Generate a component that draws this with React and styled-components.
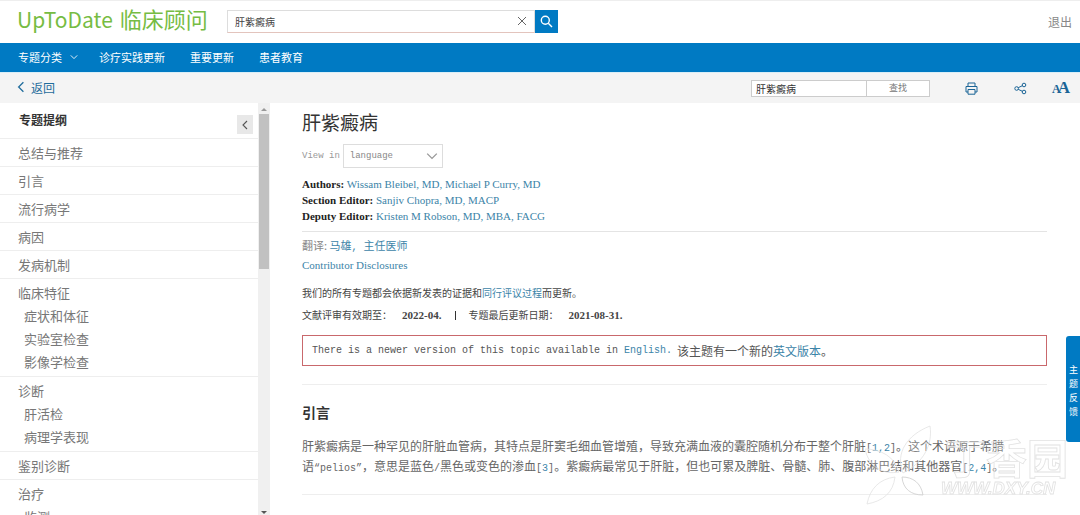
import styled, { createGlobalStyle } from "styled-components";
import { useState } from "react";

const outline = [
    { title: "总结与推荐" },
    { title: "引言" },
    { title: "流行病学" },
    { title: "病因" },
    { title: "发病机制" },
    { title: "临床特征", items: ["症状和体征", "实验室检查", "影像学检查"] },
    { title: "诊断", items: ["肝活检", "病理学表现"] },
    { title: "鉴别诊断" },
    { title: "治疗", items: ["监测"] },
];

const people = [
    { role: "Authors:", names: "Wissam Bleibel, MD, Michael P Curry, MD" },
    { role: "Section Editor:", names: "Sanjiv Chopra, MD, MACP" },
    { role: "Deputy Editor:", names: "Kristen M Robson, MD, MBA, FACG" },
];

const Chevron = ({ dir, size }) => {
    const paths = {
        down: "M1 3 L5 7 L9 3",
        left: "M7 1 L3 5 L7 9",
    };
    return (
        <svg width={size} height={size} viewBox="0 0 10 10" fill="none" stroke="currentColor" strokeWidth="1.1">
            <path d={paths[dir]} />
        </svg>
    );
};

const SearchIcon = () => (
    <svg width="13" height="13" viewBox="0 0 13 13" fill="none" stroke="#fff" strokeWidth="1.4">
        <circle cx="5.3" cy="5.3" r="4" />
        <path d="M8.3 8.3 L12 12" />
    </svg>
);

const ClearIcon = () => (
    <svg width="10" height="10" viewBox="0 0 10 10" fill="none" stroke="#666" strokeWidth="1">
        <path d="M1 1 L9 9 M9 1 L1 9" />
    </svg>
);

const PrintIcon = () => (
    <svg width="13" height="13" viewBox="0 0 13 13" fill="none" stroke="currentColor" strokeWidth="1">
        <path d="M3 4.5 V1 H10 V4.5 M3 10 H1 V4.5 H12 V10 H10 M3 7.5 H10 V12.2 H3 Z" />
    </svg>
);

const ShareIcon = () => (
    <svg width="13" height="13" viewBox="0 0 13 13" fill="none" stroke="currentColor" strokeWidth="1">
        <circle cx="2.6" cy="6.5" r="1.8" />
        <circle cx="10" cy="3" r="1.8" />
        <circle cx="10" cy="10" r="1.8" />
        <path d="M4.2 5.7 L8.4 3.7 M4.2 7.3 L8.4 9.3" />
    </svg>
);

const App = () => {
    const [query, setQuery] = useState("肝紫癜病");
    const [find, setFind] = useState("肝紫癜病");

    return (
        <Page>
            <GlobalStyle />
            <Header>
                <Logo href="#"><span>UpToDate</span><LogoCn>临床顾问</LogoCn></Logo>
                <SearchForm onSubmit={(e) => e.preventDefault()}>
                    <SearchBox>
                        <input aria-label="搜索" value={query} onChange={(e) => setQuery(e.target.value)} />
                        <button type="button" aria-label="清除" onClick={() => setQuery("")}><ClearIcon /></button>
                    </SearchBox>
                    <SearchButton aria-label="搜索"><SearchIcon /></SearchButton>
                </SearchForm>
                <Logout href="#">退出</Logout>
            </Header>
            <Nav>
                <NavLink href="#" $menu>专题分类 <Chevron dir="down" size={8} /></NavLink>
                <NavLink href="#">诊疗实践更新</NavLink>
                <NavLink href="#">重要更新</NavLink>
                <NavLink href="#">患者教育</NavLink>
            </Nav>
            <Toolbar>
                <Back href="#"><Chevron dir="left" size={12} />返回</Back>
                <FindForm onSubmit={(e) => e.preventDefault()}>
                    <input aria-label="查找" value={find} onChange={(e) => setFind(e.target.value)} />
                    <button>查找</button>
                </FindForm>
                <Tools>
                    <button aria-label="打印"><PrintIcon /></button>
                    <button aria-label="分享"><ShareIcon /></button>
                    <FontSize aria-label="字体大小"><small>A</small>A</FontSize>
                </Tools>
            </Toolbar>
            <Body>
                <Sidebar>
                    <SidebarHead>
                        <h2>专题提纲</h2>
                        <Collapse aria-label="收起"><Chevron dir="left" size={10} /></Collapse>
                    </SidebarHead>
                    <Outline>
                        {outline.map((group) => (
                            <Group key={group.title}>
                                <a href="#">{group.title}</a>
                                {group.items && (
                                    <SubList>
                                        {group.items.map((item) => (
                                            <li key={item}><a href="#">{item}</a></li>
                                        ))}
                                    </SubList>
                                )}
                            </Group>
                        ))}
                    </Outline>
                </Sidebar>
                <ScrollTrack>
                    <Arrow />
                    <Thumb />
                    <Arrow $down />
                </ScrollTrack>
                <Article>
                    <h1>肝紫癜病</h1>
                    <Language>
                        <label htmlFor="language">View in</label>
                        <SelectBox>
                            <select id="language"><option>language</option></select>
                            <Chevron dir="down" size={12} />
                        </SelectBox>
                    </Language>
                    <People>
                        {people.map((p) => (
                            <li key={p.role}><b>{p.role}</b> <a href="#">{p.names}</a></li>
                        ))}
                    </People>
                    <Credits>
                        <p>翻译: <a href="#">马雄<Latin>, </Latin>主任医师</a></p>
                        <Disclosure href="#">Contributor Disclosures</Disclosure>
                    </Credits>
                    <Review>
                        <p>我们的所有专题都会依据新发表的证据和<a href="#">同行评议过程</a>而更新。</p>
                        <Dates>
                            <span>文献评审有效期至：</span>
                            <b>2022-04.</b>
                            <i />
                            <span>专题最后更新日期：</span>
                            <b>2021-08-31.</b>
                        </Dates>
                    </Review>
                    <Notice>
                        <Latin>There is a newer version of this topic available in <a href="#">English.</a></Latin>
                        <span>该主题有一个新的<a href="#">英文版本</a>。</span>
                    </Notice>
                    <Section>
                        <h2>引言</h2>
                        <p>
                            肝紫癜病是一种罕见的肝脏血管病，其特点是肝窦毛细血管增殖，导致充满血液的囊腔随机分布于整个肝脏<Latin>[<a href="#">1,2</a>]</Latin>。这个术语源于希腊<br />
                            语<Latin>“pelios”</Latin>，意思是蓝色<Latin>/</Latin>黑色或变色的渗血<Latin>[<a href="#">3</a>]</Latin>。紫癜病最常见于肝脏，但也可累及脾脏、骨髓、肺、腹部淋巴结和其他器官<Latin>[<a href="#">2,4</a>]</Latin>。
                        </p>
                    </Section>
                </Article>
            </Body>
            <Feedback>主题反馈</Feedback>
            <Watermark viewBox="0 0 215 85" aria-hidden="true">
                <g fill="#fff" fillOpacity=".2" stroke="#e2e2e2" strokeWidth=".8">
                    <path d="M38 48 C30 28 42 10 65 1 C68 20 58 38 38 48 Z" />
                    <path d="M34 47 C18 50 4 42 0 24 C16 24 30 32 34 47 Z" />
                    <path d="M30 52 C14 54 5 64 2 79 C18 76 28 68 30 52 Z" />
                    <path d="M37 52 C38 64 46 70 58 70 C56 58 48 52 37 52 Z" stroke="#ccc" />
                    <text x="80" y="49" fontSize="41" fontWeight="700">丁香园</text>
                    <text x="76" y="69" fontSize="17" fontWeight="700" fontStyle="italic" fontFamily="Liberation Sans, sans-serif">WWW.DXY.CN</text>
                </g>
            </Watermark>
        </Page>
    );
};

const GlobalStyle = createGlobalStyle`
    *{
        box-sizing: border-box;
    }
    body{
        margin: 0;
        background: #fff;
        color: #444;
        font-family: "Noto Sans CJK SC", sans-serif;
        font-size: 12px;
    }
    h1, h2, p, ul{
        margin: 0;
        padding: 0;
    }
    ul{
        list-style: none;
    }
    a{
        color: #3c84a8;
        text-decoration: none;
    }
    button, input, select{
        font-family: inherit;
        margin: 0;
        padding: 0;
        border: 0;
        border-radius: 0;
        background: none;
        outline: none;
    }
    button{
        cursor: pointer;
    }
    svg{
        display: block;
        flex: none;
    }
`
const Page = styled.div`
    display: flex;
    flex-direction: column;
    height: 100vh;
    overflow: hidden;
`
const Header = styled.header`
    display: flex;
    align-items: center;
    flex: none;
    height: 43px;
    padding: 0 8px 2px 17px;
    border-top: 1px solid #eee;
`
const Logo = styled.a`
    display: flex;
    align-items: baseline;
    gap: 7px;
    width: 210px;
    margin-bottom: 6px;
    color: #76bc43;
    font-size: 21px;
    line-height: 32px;
    white-space: nowrap;
`
const LogoCn = styled.span`
    font-size: 22px;
`
const SearchForm = styled.form`
    display: flex;
    width: 331px;
    height: 23px;
`
const SearchBox = styled.div`
    display: flex;
    align-items: center;
    flex: 1;
    padding: 0 7px;
    border: 1px solid #ddd;
    border-bottom-color: #e3c4bd;
    input{
        flex: 1;
        min-width: 0;
        color: #444;
        font-size: 10px;
    }
`
const SearchButton = styled.button`
    display: flex;
    align-items: center;
    justify-content: center;
    width: 23px;
    background: #007ac3;
`
const Logout = styled.a`
    margin-left: auto;
    color: #888;
`
const Nav = styled.nav`
    display: flex;
    align-items: center;
    flex: none;
    gap: 25px;
    height: 29px;
    padding: 0 0 2px 18px;
    background: #007ac3;
`
const NavLink = styled.a`
    display: flex;
    align-items: center;
    gap: 8px;
    margin-right: ${(props) => props.$menu ? "-4px" : "0"};
    color: #fff;
    font-size: 11px;
`
const Toolbar = styled.div`
    display: flex;
    align-items: center;
    flex: none;
    height: 31px;
    padding: 0 10px 0 15px;
    background: #f4f4f4;
    border-top: 1px solid #d9eef7;
`
const Back = styled.a`
    display: flex;
    align-items: center;
    gap: 4px;
    padding-bottom: 2px;
    color: #1f6c9c;
`
const FindForm = styled.form`
    display: flex;
    width: 179px;
    height: 17px;
    margin-left: auto;
    background: #fff;
    border: 1px solid #ccc;
    input{
        flex: 1;
        min-width: 0;
        padding-left: 4px;
        color: #333;
        font-size: 10px;
    }
    button{
        width: 63px;
        border-left: 1px solid #ccc;
        color: #777;
        font-size: 9px;
        line-height: 14px;
    }
`
const Tools = styled.div`
    display: flex;
    align-items: center;
    gap: 36px;
    padding-left: 35px;
    button{
        color: #1a6496;
    }
`
const FontSize = styled.button`
    margin-left: -11px;
    font: bold 17px/20px "Liberation Serif", serif;
    small{
        margin-right: -3px;
        font-size: 12px;
    }
`
const Body = styled.div`
    display: flex;
    flex: 1;
    min-height: 0;
`
const Sidebar = styled.aside`
    width: 258px;
    flex: none;
    overflow: hidden;
`
const SidebarHead = styled.div`
    display: flex;
    justify-content: space-between;
    height: 35px;
    padding: 7px 5px 0 19px;
    h2{
        color: #333;
        font-size: 12px;
        line-height: 20px;
    }
`
const Collapse = styled.button`
    display: flex;
    align-items: center;
    justify-content: center;
    width: 16px;
    height: 19px;
    margin-top: 5px;
    background: #e8e8e8;
    color: #555;
`
const Outline = styled.ul`
    font-size: 13px;
    a{
        display: block;
        color: #777;
    }
`
const Group = styled.li`
    padding-left: 18px;
    border-top: 1px solid #eee;
    line-height: 27px;
`
const SubList = styled.ul`
    margin-top: -2px;
    padding: 0 0 3px 6px;
    line-height: 23px;
`
const ScrollTrack = styled.div`
    display: flex;
    flex-direction: column;
    align-items: center;
    flex: none;
    width: 12px;
    padding: 5px 0 1px;
    background: #f0f0f0;
`
const Arrow = styled.span`
    border: 3px solid transparent;
    border-top: ${(props) => props.$down ? "3px solid #555" : "0"};
    border-bottom: ${(props) => props.$down ? "0" : "3px solid #999"};
    margin-top: ${(props) => props.$down ? "auto" : "0"};
`
const Thumb = styled.span`
    width: 10px;
    height: 155px;
    margin-top: 3px;
    background: #c1c1c1;
`
const Article = styled.main`
    flex: 1;
    min-width: 0;
    padding: 5px 33px 0 32px;
    h1{
        color: #333;
        font-size: 19px;
        font-weight: 400;
        line-height: 28px;
    }
`
const Language = styled.div`
    display: flex;
    align-items: center;
    gap: 3px;
    margin-top: 8px;
    color: #999;
    font: 9px "Liberation Mono", monospace;
`
const SelectBox = styled.div`
    display: flex;
    align-items: center;
    width: 100px;
    height: 24px;
    padding: 0 4px 0 6px;
    border: 1px solid #ddd;
    select{
        flex: 1;
        appearance: none;
        color: #888;
        font-size: 9px;
    }
`
const People = styled.ul`
    margin-top: 8px;
    padding-bottom: 7px;
    border-bottom: 1px solid #e4e4e4;
    font: 11px/16px "Liberation Serif", serif;
    b{
        color: #222;
    }
`
const Latin = styled.span`
    font-family: "Liberation Mono", monospace;
    font-size: 10px;
    line-height: 1;
    white-space: pre;
`
const Credits = styled.div`
    padding-top: 3px;
    color: #888;
    font-size: 11px;
    line-height: 20px;
`
const Disclosure = styled.a`
    display: block;
    font-family: "Liberation Serif", serif;
`
const Review = styled.div`
    margin-top: 7px;
    color: #444;
    font-size: 10px;
    line-height: 22px;
`
const Dates = styled.div`
    display: flex;
    align-items: center;
    b{
        padding-left: 10px;
        font: bold 11px "Liberation Serif", serif;
    }
    i{
        width: 1px;
        height: 9px;
        margin: 0 12px 0 14px;
        background: #333;
    }
`
const Notice = styled.div`
    display: flex;
    align-items: center;
    gap: 5px;
    height: 31px;
    margin-top: 9px;
    padding-left: 9px;
    border: 1px solid #c9686c;
    color: #555;
`
const Section = styled.section`
    margin-top: 18px;
    padding-bottom: 18px;
    border-top: 1px solid #eee;
    border-bottom: 1px solid #eee;
    h2{
        margin-top: 17px;
        color: #333;
        font-size: 14px;
        line-height: 20px;
    }
    p{
        margin-top: 14px;
        color: #666;
        line-height: 20px;
        white-space: nowrap;
    }
`
const Feedback = styled.button`
    position: fixed;
    right: 0;
    top: 336px;
    width: 14px;
    height: 106px;
    padding: 4px 2px 0 3px;
    border-radius: 3px 0 0 3px;
    background: #007ac3;
    color: #fff;
    font-size: 9px;
    line-height: 14px;
`
const Watermark = styled.svg`
    position: fixed;
    right: 0;
    bottom: 5px;
    width: 215px;
    height: 85px;
    pointer-events: none;
`
export default App;
